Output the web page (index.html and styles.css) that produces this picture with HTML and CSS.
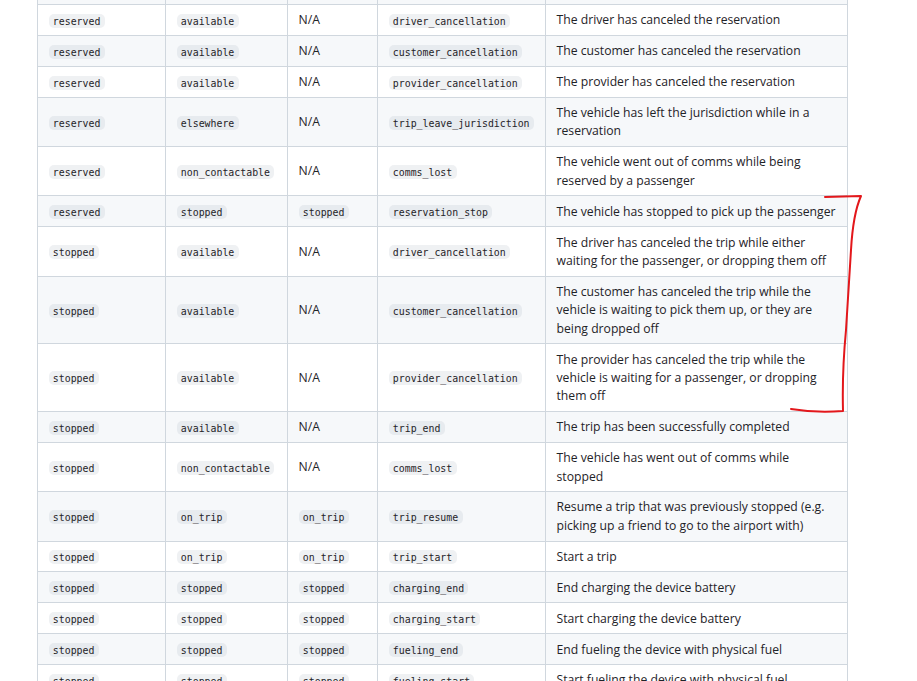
FILE: index.html
```html
<!DOCTYPE html>
<html lang="en">
<head>
<meta charset="utf-8">
<title>Vehicle events</title>
<link rel="stylesheet" href="styles.css">
</head>
<body>
<main class="page">
  <table class="md-table">
    <colgroup>
      <col class="c1"><col class="c2"><col class="c3"><col class="c4"><col class="c5">
    </colgroup>
    <tbody>
      <tr class="clip-row"><td></td><td></td><td></td><td></td><td></td></tr>
      <tr><td><code>reserved</code></td><td><code>available</code></td><td>N/A</td><td><code>driver_cancellation</code></td><td>The driver has canceled the reservation</td></tr>
      <tr><td><code>reserved</code></td><td><code>available</code></td><td>N/A</td><td><code>customer_cancellation</code></td><td>The customer has canceled the reservation</td></tr>
      <tr><td><code>reserved</code></td><td><code>available</code></td><td>N/A</td><td><code>provider_cancellation</code></td><td>The provider has canceled the reservation</td></tr>
      <tr><td><code>reserved</code></td><td><code>elsewhere</code></td><td>N/A</td><td><code>trip_leave_jurisdiction</code></td><td>The vehicle has left the jurisdiction while in a reservation</td></tr>
      <tr><td><code>reserved</code></td><td><code>non_contactable</code></td><td>N/A</td><td><code>comms_lost</code></td><td>The vehicle went out of comms while being reserved by a passenger</td></tr>
      <tr><td><code>reserved</code></td><td><code>stopped</code></td><td><code>stopped</code></td><td><code>reservation_stop</code></td><td>The vehicle has stopped to pick up the passenger</td></tr>
      <tr><td><code>stopped</code></td><td><code>available</code></td><td>N/A</td><td><code>driver_cancellation</code></td><td>The driver has canceled the trip while either waiting for the passenger, or dropping them off</td></tr>
      <tr><td><code>stopped</code></td><td><code>available</code></td><td>N/A</td><td><code>customer_cancellation</code></td><td>The customer has canceled the trip while the vehicle is waiting to pick them up, or they are being dropped off</td></tr>
      <tr><td><code>stopped</code></td><td><code>available</code></td><td>N/A</td><td><code>provider_cancellation</code></td><td>The provider has canceled the trip while the vehicle is waiting for a passenger, or dropping them off</td></tr>
      <tr><td><code>stopped</code></td><td><code>available</code></td><td>N/A</td><td><code>trip_end</code></td><td>The trip has been successfully completed</td></tr>
      <tr><td><code>stopped</code></td><td><code>non_contactable</code></td><td>N/A</td><td><code>comms_lost</code></td><td>The vehicle has went out of comms while stopped</td></tr>
      <tr><td><code>stopped</code></td><td><code>on_trip</code></td><td><code>on_trip</code></td><td><code>trip_resume</code></td><td>Resume a trip that was previously stopped (e.g. picking up a friend to go to the airport with)</td></tr>
      <tr><td><code>stopped</code></td><td><code>on_trip</code></td><td><code>on_trip</code></td><td><code>trip_start</code></td><td>Start a trip</td></tr>
      <tr><td><code>stopped</code></td><td><code>stopped</code></td><td><code>stopped</code></td><td><code>charging_end</code></td><td>End charging the device battery</td></tr>
      <tr><td><code>stopped</code></td><td><code>stopped</code></td><td><code>stopped</code></td><td><code>charging_start</code></td><td>Start charging the device battery</td></tr>
      <tr><td><code>stopped</code></td><td><code>stopped</code></td><td><code>stopped</code></td><td><code>fueling_end</code></td><td>End fueling the device with physical fuel</td></tr>
      <tr><td><code>stopped</code></td><td><code>stopped</code></td><td><code>stopped</code></td><td><code>fueling_start</code></td><td>Start fueling the device with physical fuel</td></tr>
    </tbody>
  </table>
  <svg class="annotation" width="917" height="681" viewBox="0 0 917 681" aria-hidden="true">
    <path d="M825 197 L861 196 Q853 214 851 250 L846 330 Q842 372 843 411 Q815 413 791 409" fill="none" stroke="#e3171b" stroke-width="2" stroke-linecap="round" stroke-linejoin="round"/>
  </svg>
</main>
</body>
</html>
```

FILE: styles.css
```css
html, body {
  margin: 0;
  padding: 0;
  background: #ffffff;
  overflow: hidden;
}

.page {
  position: relative;
  width: 917px;
  height: 681px;
  overflow: hidden;
  padding-left: 37px;
  box-sizing: border-box;
}

.md-table {
  border-collapse: collapse;
  border-spacing: 0;
  table-layout: fixed;
  width: 810px;
  margin-top: -1px;
  font-family: "Open Sans", "Noto Sans", sans-serif;
  font-size: 12.2px;
  line-height: 18.4px;
  color: #1f2328;
}

.c1 { width: 128px; }
.c2 { width: 122px; }
.c3 { width: 90px; }
.c4 { width: 168px; }
.c5 { width: 302px; }

.md-table td {
  border: 1px solid #d0d7de;
  padding: 6.25px 10.5px 5.25px;
  vertical-align: middle;
  text-align: left;
}

.md-table .clip-row td {
  padding: 0;
  height: 5px;
  line-height: 0;
  border-top: 0;
}

.md-table tr {
  background: #ffffff;
}

.md-table tr:nth-child(odd) {
  background: #f6f8fa;
}

.md-table code {
  font-family: "DejaVu Sans Mono", "Liberation Mono", monospace;
  font-size: 9.9px;
  line-height: 1;
  padding: 1.5px 4.3px;
  border-radius: 5px;
  background: rgba(175, 184, 193, 0.2);
  color: #1f2328;
  white-space: nowrap;
}

.annotation {
  position: absolute;
  left: 0;
  top: 0;
  pointer-events: none;
}
```
